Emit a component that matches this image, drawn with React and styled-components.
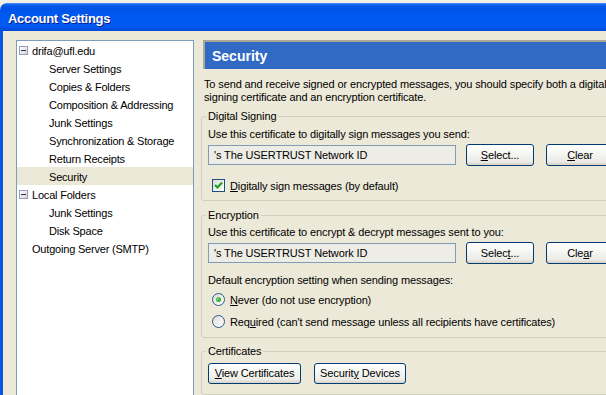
import React from 'react';
import styled, { createGlobalStyle } from 'styled-components';

const GlobalStyle = createGlobalStyle`
  html, body {
    margin: 0;
    padding: 0;
    width: 606px;
    height: 395px;
    overflow: hidden;
    background: #f1efe8;
  }

  body {
    font-family: "Liberation Sans", Arial, sans-serif;
    font-size: 11px;
    letter-spacing: -0.13px;
    color: #000;
  }
`;

const StyledWindow = styled.div`
  width: 720px;
  height: 392px;
  margin-top: 3px;
  display: flex;
  flex-direction: column;
`;

const TitleBar = styled.div`
  height: 28px;
  flex: none;
  box-sizing: border-box;
  display: flex;
  align-items: center;
  padding: 3px 0 0 8px;
  border-radius: 7px 7px 0 0;
  background: linear-gradient(
    to bottom,
    #4a93f7 0,
    #0c5ced 2px,
    #0053e6 5px,
    #0059f0 45%,
    #005bf3 80%,
    #0048d8 100%
  );
  color: #fff;
  font-weight: bold;
  font-size: 13px;
  letter-spacing: -0.3px;
  text-shadow: 1px 1px #0a1c8c;
`;

const Frame = styled.div`
  flex: 1;
  display: flex;
  gap: 7px;
  min-height: 0;
  padding: 9px 0 0 13px;
  border-left: 3px solid #0a55e8;
  background: #ece9d8;
`;

const StyledTree = styled.div`
  width: 178px;
  flex: none;
  box-sizing: border-box;
  border: 1px solid #7f9db9;
  border-bottom: none;
  background: #fff;
  letter-spacing: -0.2px;
`;

const TreeRow = styled.div`
  height: 18px;
  display: flex;
  align-items: center;
  padding-top: 1px;
  box-sizing: border-box;
  padding-left: ${({ $level, $toggle }) => ($level ? 32 : $toggle ? 2 : 15)}px;
  background: ${({ $selected }) => ($selected ? '#ebe8d7' : 'transparent')};
  white-space: nowrap;
`;

const ExpandBox = styled.span`
  width: 9px;
  height: 9px;
  margin-right: 4px;
  box-sizing: border-box;
  position: relative;
  border: 1px solid #9a9ac6;
  background: linear-gradient(135deg, #ffffff, #d8d5c8);

  &:after {
    content: '';
    position: absolute;
    left: 1px;
    top: 3px;
    width: 5px;
    height: 1px;
    background: #22316a;
  }
`;

const StyledPanel = styled.div`
  flex: 1;
  display: flex;
  flex-direction: column;
  min-width: 0;
`;

const PanelHeader = styled.div`
  height: 29px;
  margin-left: 2px;
  box-sizing: border-box;
  display: flex;
  align-items: center;
  padding-left: 7px;
  border-top: 2px solid #aca899;
  border-left: 2px solid #aca899;
  background: #316ac5;
  color: #fff;
  font-size: 14px;
  font-weight: bold;
  letter-spacing: 0;
`;

const Description = styled.p`
  margin: 8.5px 0 0 3px;
  line-height: 13px;
  white-space: nowrap;
`;

const GroupBox = styled.fieldset`
  margin: ${({ $gap }) => $gap}px 0 0 0;
  padding: 0 6px ${({ $bottom }) => $bottom}px 6px;
  border: 1px solid #d0d0bf;
  border-radius: 3px;
  min-width: 0;

  legend {
    padding: 0 2px;
    margin-left: -2px;
    line-height: 13px;
  }
`;

const FieldText = styled.div`
  margin-top: ${({ $gap }) => $gap}px;
  line-height: 13px;
  white-space: nowrap;
`;

const CertRow = styled.div`
  display: flex;
  align-items: center;
  height: 22px;
  margin-top: 3.5px;
`;

const CertBox = styled.div`
  width: 248px;
  height: 20px;
  box-sizing: border-box;
  padding-left: 5px;
  line-height: 18px;
  border: 1px solid #7f9db9;
  background: #eeede5;
  white-space: nowrap;
`;

const Button = styled.button`
  width: ${({ $width }) => $width}px;
  height: ${({ $height }) => $height || 22}px;
  margin-left: ${({ $gap }) => $gap || 0}px;
  padding: 0;
  box-sizing: border-box;
  border: 1px solid #003c74;
  border-radius: 3px;
  background: linear-gradient(
    to bottom,
    #ffffff 0%,
    #f6f6f3 40%,
    #ecebe5 82%,
    #d8d2c6 100%
  );
  font-family: inherit;
  font-size: 11px;
  letter-spacing: inherit;
  color: #000;
  white-space: nowrap;
`;

const CheckRow = styled.label`
  display: flex;
  align-items: center;
  height: ${({ $height }) => $height}px;
  margin-top: ${({ $gap }) => $gap}px;
  padding-left: 4px;
  gap: 5px;
  white-space: nowrap;
`;

const CheckBox = styled.span`
  width: 13px;
  height: 13px;
  flex: none;
  box-sizing: border-box;
  border: 1px solid #1c5180;
  background: linear-gradient(135deg, #dcdcd7, #ffffff);
  display: flex;
  align-items: center;
  justify-content: center;
`;

const Radio = styled.span`
  width: 13px;
  height: 13px;
  flex: none;
  box-sizing: border-box;
  border: 1px solid #2f5a8a;
  border-radius: 50%;
  background: linear-gradient(135deg, #dcdcd7, #ffffff);
  display: flex;
  align-items: center;
  justify-content: center;

  &:after {
    content: '';
    display: ${({ $checked }) => ($checked ? 'block' : 'none')};
    width: 5px;
    height: 5px;
    border-radius: 50%;
    background: radial-gradient(circle at 40% 40%, #7be07b, #21a121 70%);
  }
`;

const ButtonRow = styled.div`
  display: flex;
  margin-top: 5px;
`;

const treeItems = [
  { label: 'drifa@ufl.edu', toggle: true },
  { label: 'Server Settings', level: 1 },
  { label: 'Copies & Folders', level: 1 },
  { label: 'Composition & Addressing', level: 1 },
  { label: 'Junk Settings', level: 1 },
  { label: 'Synchronization & Storage', level: 1 },
  { label: 'Return Receipts', level: 1 },
  { label: 'Security', level: 1, selected: true },
  { label: 'Local Folders', toggle: true },
  { label: 'Junk Settings', level: 1 },
  { label: 'Disk Space', level: 1 },
  { label: 'Outgoing Server (SMTP)' },
];

const CertControls = ({ select, clear }) => (
  <CertRow>
    <CertBox>'s The USERTRUST Network ID</CertBox>
    <Button $width={68} $gap={10}>
      {select}
    </Button>
    <Button $width={68} $gap={12}>
      {clear}
    </Button>
  </CertRow>
);

const App = () => (
  <>
    <GlobalStyle />
    <StyledWindow>
      <TitleBar>Account Settings</TitleBar>
      <Frame>
        <StyledTree>
          {treeItems.map((item, i) => (
            <TreeRow key={i} $level={item.level} $toggle={item.toggle} $selected={item.selected}>
              {item.toggle && <ExpandBox />}
              {item.label}
            </TreeRow>
          ))}
        </StyledTree>

        <StyledPanel>
          <PanelHeader>Security</PanelHeader>
          <Description>
            To send and receive signed or encrypted messages, you should specify both a digital
            <br />
            signing certificate and an encryption certificate.
          </Description>

          <GroupBox $gap={6} $bottom={8}>
            <legend>Digital Signing</legend>
            <FieldText $gap={5}>Use this certificate to digitally sign messages you send:</FieldText>
            <CertControls
              select={
                <>
                  <u>S</u>elect...
                </>
              }
              clear={
                <>
                  <u>C</u>lear
                </>
              }
            />
            <CheckRow $gap={13} $height={13}>
              <CheckBox>
                <svg width="9" height="9" viewBox="0 0 9 9">
                  <polyline
                    points="1,4 3.5,6.5 8,1.5"
                    fill="none"
                    stroke="#21a121"
                    strokeWidth="2.2"
                  />
                </svg>
              </CheckBox>
              <span>
                <u>D</u>igitally sign messages (by default)
              </span>
            </CheckRow>
          </GroupBox>

          <GroupBox $gap={7.5} $bottom={7}>
            <legend>Encryption</legend>
            <FieldText $gap={4}>Use this certificate to encrypt &amp; decrypt messages sent to you:</FieldText>
            <CertControls
              select={
                <>
                  Selec<u>t</u>...
                </>
              }
              clear={
                <>
                  Cle<u>a</u>r
                </>
              }
            />
            <FieldText $gap={9.5}>Default encryption setting when sending messages:</FieldText>
            <CheckRow $gap={5} $height={16}>
              <Radio $checked />
              <span>
                <u>N</u>ever (do not use encryption)
              </span>
            </CheckRow>
            <CheckRow $gap={6} $height={16}>
              <Radio />
              <span>
                Req<u>u</u>ired (can't send message unless all recipients have certificates)
              </span>
            </CheckRow>
          </GroupBox>

          <GroupBox $gap={7} $bottom={10}>
            <legend>Certificates</legend>
            <ButtonRow>
              <Button $width={93} $height={21}>
                <u>V</u>iew Certificates
              </Button>
              <Button $width={92} $height={21} $gap={13}>
                Securit<u>y</u> Devices
              </Button>
            </ButtonRow>
          </GroupBox>
        </StyledPanel>
      </Frame>
    </StyledWindow>
  </>
);

export default App;
